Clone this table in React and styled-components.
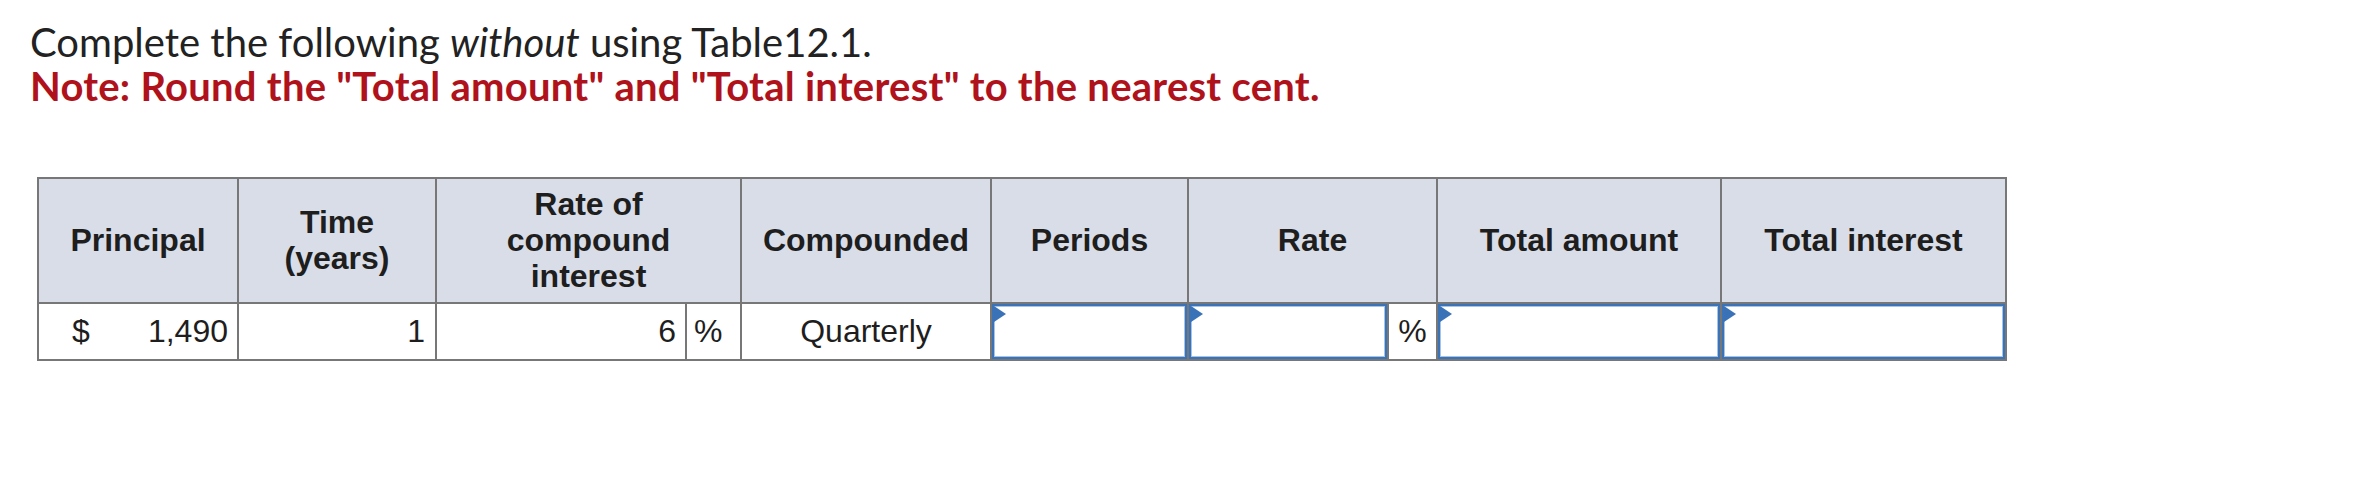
import React from "react";
import styled, { createGlobalStyle } from "styled-components";

const Global = createGlobalStyle`
  html, body { margin: 0; padding: 0; background: #fff; }
  body { font-family: "Liberation Sans", Arial, sans-serif; }
`;

const Page = styled.div`
  padding: 20px 0 0 0;
`;

const Intro = styled.div`
  padding-left: 30px;
  font-family: Lato, "Open Sans", sans-serif;
  font-size: 40px;
  line-height: 44px;
  color: #222;
`;

const Note = styled.div`
  padding-left: 30px;
  font-family: Lato, "Open Sans", sans-serif;
  font-weight: 700;
  font-size: 40px;
  line-height: 44px;
  letter-spacing: 0.25px;
  color: #b0121b;
`;

const Grid = styled.div`
  display: inline-grid;
  margin: 69px 0 0 37px;
  grid-template-columns: 198px 196px 248px 53px 248px 195px 198px 47px 282px 283px;
  grid-template-rows: 123px 55px;
  gap: 2px;
  padding: 2px;
  background: #777;
  font-family: "Liberation Sans", Arial, sans-serif;
  font-size: 32px;
  line-height: 36px;
  color: #1e1e1e;
`;

const Head = styled.div`
  grid-column: span ${(p) => p.$span || 1};
  background: #d9dde7;
  font-weight: 700;
  display: flex;
  align-items: center;
  justify-content: center;
  text-align: center;
  padding-bottom: 2px;
`;

const Cell = styled.div`
  background: #fff;
  display: flex;
  align-items: center;
  justify-content: ${(p) => p.$align || "flex-end"};
  padding: ${(p) => p.$pad || "0 10px"};
  padding-bottom: 2px;
`;

const MoneyCell = styled(Cell)`
  justify-content: space-between;
  padding: 0 9px 2px 33px;
`;

const InputCell = styled.div`
  position: relative;
  background: #fff;
  display: flex;
`;

const Field = styled.input`
  box-sizing: border-box;
  width: 100%;
  height: 100%;
  margin: 0;
  border: 2px solid #3b73b8;
  box-shadow: inset 0 0 0 1px #a9c3e4;
  outline: none;
  background: #fff;
  font: inherit;
  padding: 0 8px;
  text-align: right;
`;

const Marker = styled.span`
  position: absolute;
  left: 2px;
  top: 2px;
  width: 0;
  height: 0;
  border-top: 8px solid transparent;
  border-bottom: 8px solid transparent;
  border-left: 12px solid #3a72b8;
  pointer-events: none;
`;

function Answer() {
  return (
    <InputCell>
      <Field type="text" aria-label="answer" />
      <Marker />
    </InputCell>
  );
}

export default function App() {
  return (
    <>
      <Global />
      <Page>
        <Intro>
          Complete the following <em>without</em> using Table12.1.
        </Intro>
        <Note>Note: Round the "Total amount" and "Total interest" to the nearest cent.</Note>
        <Grid>
          <Head>Principal</Head>
          <Head>
            Time
            <br />
            (years)
          </Head>
          <Head $span={2}>
            Rate of
            <br />
            compound
            <br />
            interest
          </Head>
          <Head>Compounded</Head>
          <Head>Periods</Head>
          <Head $span={2}>Rate</Head>
          <Head>Total amount</Head>
          <Head>Total interest</Head>

          <MoneyCell>
            <span>$</span>
            <span>1,490</span>
          </MoneyCell>
          <Cell>1</Cell>
          <Cell $pad="0 9px">6</Cell>
          <Cell $align="flex-start" $pad="0 7px">%</Cell>
          <Cell $align="center" $pad="0">Quarterly</Cell>
          <Answer />
          <Answer />
          <Cell $align="center" $pad="0">%</Cell>
          <Answer />
          <Answer />
        </Grid>
      </Page>
    </>
  );
}
